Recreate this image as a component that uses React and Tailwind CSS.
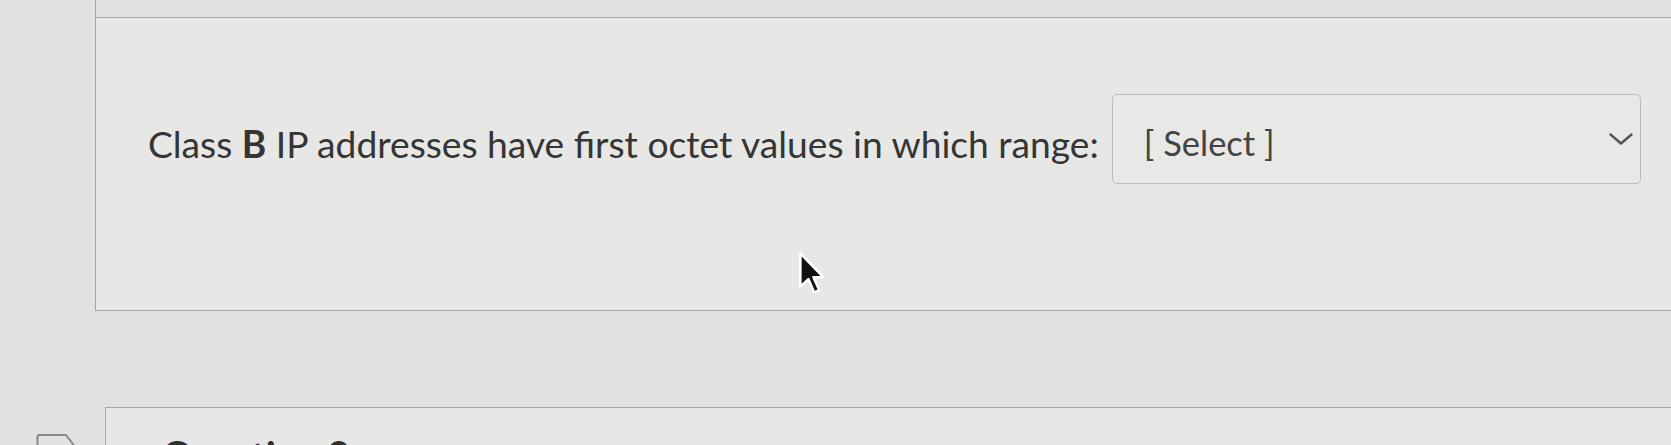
export default function App() {
  return (
    <div className="relative w-[1671px] h-[445px] overflow-hidden bg-[#e2e2e0] font-['Lato','Noto_Sans',sans-serif] text-[#353535]">
      {/* lower edge of the previous question */}
      <div className="ml-[95px] h-[17px] w-[1600px] border-l border-[#a6a6a4]" />

      {/* current question */}
      <div className="ml-[95px] h-[294px] w-[1600px] border-l border-t border-b border-[#a6a6a4] bg-[#e7e7e5] pl-[52px] pt-[76px]">
        <div className="flex items-center gap-[13px]">
          <p className="mt-[10px] text-[37.2px] leading-none whitespace-nowrap">
            Class <span className="font-bold">B</span> IP addresses have first octet values in which range:
          </p>
          <div className="flex h-[90px] w-[529px] items-center justify-between rounded-[5px] border border-[#bdbdbb] bg-[#e8e8e6] pl-[31px] pr-[7px]">
            <span className="mt-[9px] text-[34.5px] leading-none text-[#444444]">[ Select ]</span>
            <svg width="24" height="12" viewBox="0 0 24 12">
              <polyline points="1.5,1.5 12,10.5 22.5,1.5" fill="none" stroke="#555555" strokeWidth="2.4" strokeLinecap="round" strokeLinejoin="round" />
            </svg>
          </div>
        </div>
      </div>

      {/* next question */}
      <div className="mt-[96px] flex">
        <svg width="42" height="20" viewBox="0 0 42 20" className="ml-[36px] mt-[27px] shrink-0">
          <path d="M1.5 20 L1.5 3 Q1.5 1 3.5 1 L30 1 L40 14" fill="none" stroke="#8a8a88" strokeWidth="2" strokeLinejoin="round" />
        </svg>
        <div className="ml-[27px] h-[60px] w-[1600px] border-l border-t border-[#a6a6a4] bg-[#e7e7e5] pl-[56px] pt-[27px]">
          <h3 className="text-[38px] font-bold leading-none text-[#2f2f2f]">Question 9</h3>
        </div>
      </div>

      {/* mouse pointer */}
      <svg width="30" height="46" viewBox="0 0 13 20" className="absolute left-[798px] top-[251px]">
        <path d="M1 1 L1 15.5 L4.5 12.2 L7 18 L9.2 17 L6.7 11.4 L11 11.4 Z" fill="#111111" stroke="#ffffff" strokeWidth="1.1" strokeLinejoin="round" />
      </svg>
    </div>
  );
}
